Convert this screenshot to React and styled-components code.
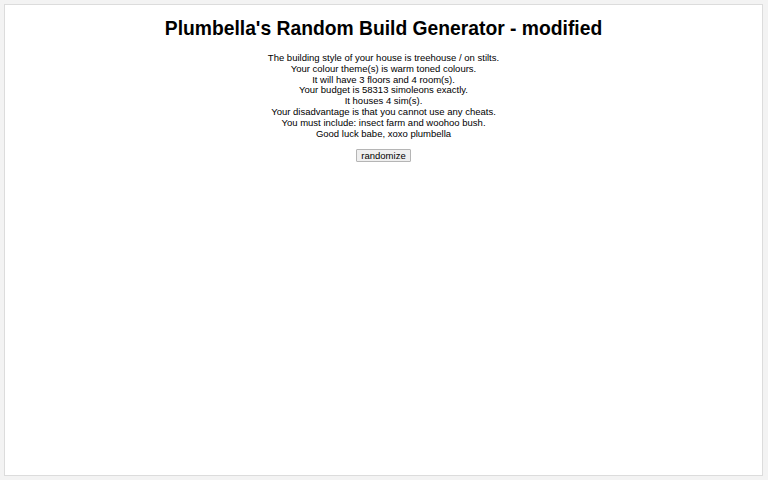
import React, { useState } from "react";
import styled, { createGlobalStyle } from "styled-components";

const Global = createGlobalStyle`
  html, body { margin: 0; padding: 0; background: #f3f3f3; }
  body { font-family: "Liberation Sans", Arial, sans-serif; color: #000; }
`;

const Page = styled.div`
  padding: 4px 5px 4px 4px;
  box-sizing: border-box;
  height: 480px;
`;

const Panel = styled.main`
  background: #fff;
  border: 1px solid #dcdcdc;
  height: 100%;
  box-sizing: border-box;
  display: flex;
  flex-direction: column;
  align-items: center;
  padding-top: 13px;
`;

const Title = styled.h1`
  font-size: 19.3px;
  font-weight: bold;
  margin: 0 0 13px;
  line-height: 22px;
`;

const Lines = styled.div`
  font-size: 9.5px;
  line-height: 10.8px;
  text-align: center;
`;

const Button = styled.button`
  margin-top: 10px;
  font-family: "Liberation Sans", Arial, sans-serif;
  font-size: 9.5px;
  line-height: 11px;
  padding: 0 4px;
  background: #efefef;
  border: 1px solid #b5b5b5;
  border-radius: 1px;
  color: #000;
`;

const styles = ["treehouse / on stilts"];

export default function App() {
  const [data] = useState({
    style: styles[0],
    theme: "warm toned colours",
    floors: 3,
    rooms: 4,
    budget: 58313,
    sims: 4,
    disadvantage: "you cannot use any cheats",
    include: "insect farm and woohoo bush",
  });
  return (
    <>
      <Global />
      <Page>
        <Panel>
          <Title>Plumbella's Random Build Generator - modified</Title>
          <Lines>
            <div>The building style of your house is {data.style}.</div>
            <div>Your colour theme(s) is {data.theme}.</div>
            <div>It will have {data.floors} floors and {data.rooms} room(s).</div>
            <div>Your budget is {data.budget} simoleons exactly.</div>
            <div>It houses {data.sims} sim(s).</div>
            <div>Your disadvantage is that {data.disadvantage}.</div>
            <div>You must include: {data.include}.</div>
            <div>Good luck babe, xoxo plumbella</div>
          </Lines>
          <Button>randomize</Button>
        </Panel>
      </Page>
    </>
  );
}
